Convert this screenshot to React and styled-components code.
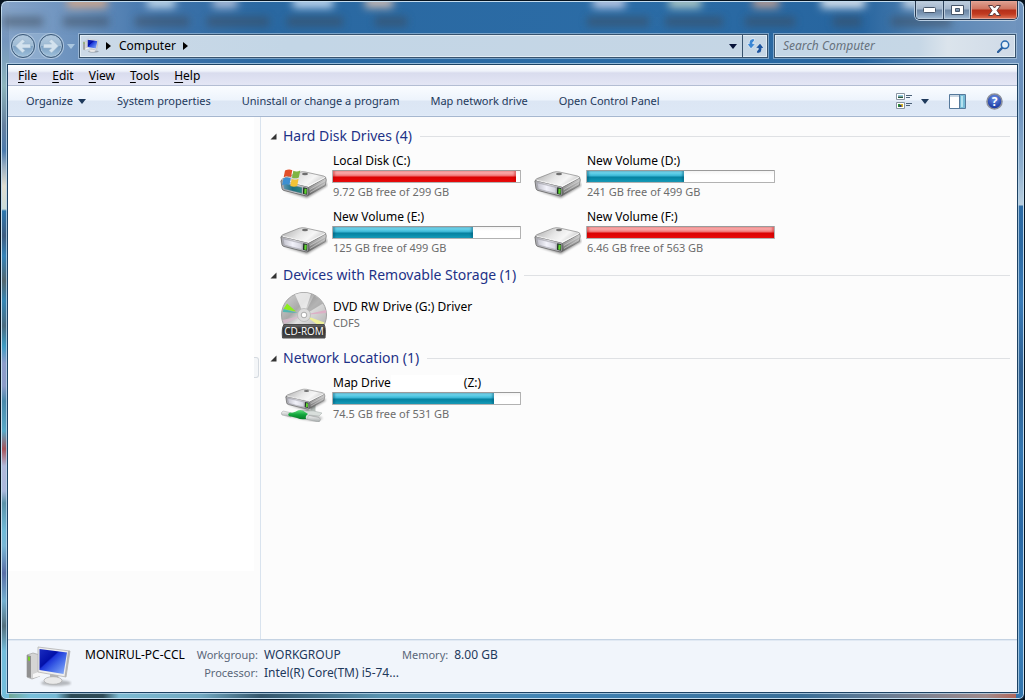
import React from 'react';
import styled, { createGlobalStyle, css } from 'styled-components';

const Global = createGlobalStyle`
  * { box-sizing: border-box; }
  body {
    margin: 0;
    background: #06131f;
    font: 12px/16px "Noto Sans", "Open Sans", sans-serif;
    color: #000;
  }
  button, input { font: inherit; color: inherit; }
  h2, p, ul, dl, dd, dt { margin: 0; padding: 0; font-weight: normal; }
  svg { display: block; flex: none; }
`;

const plain = css`
  border: 0;
  padding: 0;
  background: none;
`;

/* ---------- window frame ---------- */

const Window = styled.div`
  position: relative;
  display: flex;
  flex-direction: column;
  min-height: 100vh;
  padding: 0 7px 6px 7px;
  border: 1px solid #06131f;
  border-radius: 7px 7px 6px 6px;
  box-shadow: inset 0 0 0 1px #c4dcee;
  overflow: hidden;
  background:
    linear-gradient(#6f93bd 0, #6a90bc 100px, #8fb0cf 165px, #b9cede 204px, #2c6ba5 205px, #2d6aa2 245px, #3a7cb8 300px, #2f5f90 370px, #3577b0 450px, #2a69a5 530px, #3b80b9 640px, #3374ab) right / 8px 100% no-repeat,
    linear-gradient(#8aa6c8 0, #7495bd 40px, #8db5bd 85px, #65809f 125px, #4c7bad 150px, #97adc1 165px, #e0ddd0 185px, #c9dbd9 208px, #2d77ae 210px, #3f5d80 235px, #3483b8 255px, #54676f 280px, #3586b4 300px, #4b6b80 325px, #3d9cc4 345px, #8c9dcb 362px, #8b9cc8 385px, #4a89aa 400px, #58a9c8 430px, #a8545a 448px, #b0b9da 465px, #a9b8dc 490px, #5c92a8 502px, #70bad8 530px, #79b7d6 545px, #596fa6 572px, #74b0d0 600px, #54707e 625px, #73bddb 650px) left / 8px 100% no-repeat,
    linear-gradient(90deg, #6f9f7c 0, #78bfdb 30px, #75b9d5 55px, #2c4a55 70px, #2f4b57 102px, #7dbbd3 118px, #71a8c0 200px, #34566c 260px, #5a93b0 380px, #4083b5 560px, #3a6f98 800px, #a08b8c 985px, #b65c4c) bottom / 100% 8px no-repeat,
    linear-gradient(90deg, #86a4c8 0, #6990bd 80px, #3f73aa 160px, #2a68a1 260px, #2b6ca6 640px, #27659f 860px, #5b87b5 940px, #7396bf);
`;

const Reflection = styled.svg`
  position: absolute;
  left: 0;
  top: 1px;
`;

const Caption = styled.header`
  position: relative;
  display: flex;
  justify-content: flex-end;
  align-items: flex-start;
  height: 33px;
  margin-right: -1px;
`;

const CaptionGroup = styled.div`
  display: flex;
  height: 19px;
  border: 1px solid #26384f;
  border-top: 0;
  border-radius: 0 0 5px 5px;
  box-shadow: 0 0 0 1px #b8cde2;
  overflow: hidden;
`;

const CaptionButton = styled.button`
  ${plain}
  display: grid;
  place-items: center;
  width: ${(p) => (p.$close ? 47 : 27)}px;
  border-left: ${(p) => (p.$first ? 0 : 1)}px solid #30445e;
  box-shadow: inset 0 0 0 1px ${(p) => (p.$close ? '#e5a394' : '#b9cbdc')};
  background: ${(p) =>
    p.$close
      ? 'linear-gradient(#dfa293 0, #cf7460 8px, #b42f19 9px, #c13a20 13px, #e0785a)'
      : 'linear-gradient(#c0cfdf 0, #a3b6cc 8px, #6d87a5 9px, #7c97b5 13px, #a5bfd8)'};
`;

const NavRow = styled.nav`
  position: relative;
  display: flex;
  align-items: center;
  height: 24px;
  margin-bottom: 6px;
`;

const Travel = styled.div`
  display: flex;
  align-items: center;
  gap: 4px;
  height: 24px;
  margin-left: 3px;
  border-radius: 12px;
  background: rgba(210, 228, 243, 0.22);
  box-shadow: 0 0 0 1px rgba(200, 220, 240, 0.35);
`;

const RoundButton = styled.button`
  ${plain}
  display: grid;
  place-items: center;
  width: 24px;
  height: 24px;
  border: 1px solid #3a5877;
  border-radius: 50%;
  box-shadow: inset 0 0 0 1px #a9c2d9, 0 0 0 1px rgba(210, 226, 240, 0.5);
  background: linear-gradient(#b3cadf 0, #9dbad4 50%, #7b9fc2 52%, #9fc1dc);
`;

const RecentButton = styled.button`
  ${plain}
  display: grid;
  place-items: center;
  width: 16px;
  height: 20px;
`;

const glassField = css`
  display: flex;
  align-items: center;
  height: 24px;
  border: 1px solid #38536e;
  outline: 1px solid rgba(190, 212, 232, 0.55);
  outline-offset: 0;
  box-shadow: inset 0 0 0 1px #e2edf5;
`;

const Address = styled.div`
  ${glassField}
  flex: 1;
  background: linear-gradient(90deg, #cbd9e7, #c3d6e6 30%, #c5d6e5);
`;

const Crumbs = styled.div`
  display: flex;
  align-items: center;
  flex: 1;
  padding-left: 3px;
`;

const Crumb = styled.button`
  ${plain}
  margin: 0 7px 0 6px;
`;

const CrumbArrow = styled.button`
  ${plain}
  display: grid;
  place-items: center;
  width: 6px;
  height: 20px;
  margin-left: ${(p) => (p.$lead ? 6 : 0)}px;
  margin-right: 2px;
`;

const AddressButton = styled.button`
  ${plain}
  display: grid;
  place-items: center;
  width: ${(p) => (p.$divided ? 25 : 18)}px;
  height: 22px;
  border-left: ${(p) => (p.$divided ? '1px solid #38536e' : 0)};
`;

const Search = styled.form`
  ${glassField}
  flex: 0 0 242px;
  margin: 0 1px 0 6px;
  padding: 0 5px 0 8px;
  background: linear-gradient(90deg, #c3d6e6 0, #c6d7e6 60%, #dbe4ec 72%, #cfdae7);
`;

const SearchInput = styled.input`
  ${plain}
  flex: 1;
  min-width: 0;
  outline: 0;
  font-style: italic;
  &::placeholder { color: #66717c; opacity: 1; }
`;

/* ---------- client area ---------- */

const Client = styled.div`
  position: relative;
  display: flex;
  flex-direction: column;
  flex: 1;
  border: 1px solid #1d4263;
  margin: 0 -1px;
  box-shadow: 0 0 0 1px rgba(190, 216, 236, 0.75);
  background: #fcfcfc;
`;

const MenuBar = styled.div`
  display: flex;
  align-items: center;
  gap: 15px;
  height: 21px;
  padding: 2px 0 0 10px;
  border-bottom: 1px solid #b3bdd3;
  background: linear-gradient(#fff 0, #eef2fa 6px, #d9dcee 8px, #e4e6f5);
`;

const MenuItem = styled.button`
  ${plain}
  u { text-underline-offset: 2px; }
`;

const Toolbar = styled.div`
  display: flex;
  align-items: center;
  gap: 31px;
  height: 31px;
  padding: 0 14px 0 18px;
  border-bottom: 1px solid #a6b7cf;
  background: linear-gradient(#fafcff 0, #edf4fc 14px, #dce6f4 15px, #dde8f6 29px, #e6eefa);
  font-size: 11px;
  color: #1e395b;
`;

const Command = styled.button`
  ${plain}
  display: flex;
  align-items: center;
  gap: 5px;
`;

const ToolIcons = styled.div`
  display: flex;
  align-items: center;
  gap: 20px;
  margin-left: auto;
`;

const IconButton = styled.button`
  ${plain}
  display: flex;
  align-items: center;
  gap: 8px;
`;

const Body = styled.div`
  display: flex;
  flex: 1;
`;

const Sidebar = styled.aside`
  position: relative;
  flex: 0 0 253px;
  padding: 0 6px 68px 0;
  border-right: 1px solid #d9e3ee;
  display: flex;
`;

const Tree = styled.div`
  flex: 1;
  background: #fff;
`;

const Grip = styled.button`
  ${plain}
  position: absolute;
  right: 1px;
  top: 50%;
  margin-top: -21px;
  width: 5px;
  height: 21px;
  border: 1px solid #d5dae0;
  border-left: 0;
  border-radius: 0 3px 3px 0;
  background: #f4f6f8;
`;

const Main = styled.main`
  flex: 1;
  padding: 8px 7px 8px 9px;
`;

const Group = styled.section`
  margin-bottom: 4px;
`;

const GroupHeader = styled.div`
  display: flex;
  align-items: center;
  height: 22px;
  margin-bottom: 1px;
  &::after {
    content: "";
    flex: 1;
    height: 1px;
    margin-left: 8px;
    background: #dfe1e4;
  }
`;

const Collapse = styled.button`
  ${plain}
  width: 13px;
`;

const GroupTitle = styled.h2`
  font-size: 14px;
  line-height: 22px;
  color: #1e3287;
`;

const Items = styled.ul`
  display: grid;
  grid-template-columns: repeat(auto-fill, 254px);
  padding-left: 10px;
  list-style: none;
`;

const Item = styled.li`
  display: flex;
  align-items: center;
  gap: 4px;
  height: 56px;
`;

const Info = styled.div`
  width: 189px;
`;

const Name = styled.p`
  display: flex;
  padding-left: 1px;
  white-space: nowrap;
`;

const Masked = styled.span`
  width: 73px;
  background: #fff;
`;

const Note = styled.p`
  padding-left: 1px;
  font-size: 11px;
  color: #6d6d6d;
`;

const Meter = styled.div`
  height: 13px;
  margin: 1px 0;
  border: 1px solid;
  border-color: #9b9b9b #b2b2b2 #b2b2b2;
  border-radius: 1px;
  background: linear-gradient(#f4f4f4, #fff 4px);
`;

const Fill = styled.div`
  height: 11px;
  box-shadow: inset 2px 0 2px ${(p) => (p.$full ? 'rgba(190,0,0,.35)' : 'rgba(0,80,110,.4)')},
    inset -2px 0 2px ${(p) => (p.$full ? 'rgba(190,0,0,.35)' : 'rgba(0,80,110,.4)')};
  background: ${(p) =>
    p.$full
      ? 'linear-gradient(#fbb7b7 0, #f79a9a 3px, #f06a6a 5px, #d90202 6px, #e30505 9px, #f01414)'
      : 'linear-gradient(#8adcf0 0, #55cae4 3px, #38b3d2 5px, #06819f 6px, #0b8fae 9px, #25b0cc)'};
`;

const Details = styled.footer`
  display: flex;
  align-items: flex-start;
  min-height: 53px;
  padding: 4px 18px 0;
  border-top: 1px solid #c5d3e3;
  box-shadow: inset 0 1px 0 #e1e9f3;
  background: #f1f5fb;
`;

const HostName = styled.p`
  width: 105px;
  margin-left: 13px;
  padding-top: 2px;
  line-height: 18px;
`;

const Facts = styled.dl`
  display: grid;
  grid-template-columns: 62px 132px auto auto;
  column-gap: 6px;
  grid-auto-rows: 18px;
  padding: 2px 0 0 6px;
  line-height: 18px;
  white-space: nowrap;
  dt { font-size: 11px; color: #5a6779; text-align: right; }
  dd { color: #1e395b; }
`;

/* ---------- drawings ---------- */

const DownArrow = ({ color = '#1e395b' }) => (
  <svg width="8" height="5"><path d="M0 0h8L4 5z" fill={color} /></svg>
);
const RightArrow = () => (
  <svg width="5" height="8"><path d="M0 0l5 4-5 4z" fill="#000" /></svg>
);

const Defs = () => (
  <svg width="0" height="0" style={{ position: 'absolute' }} aria-hidden="true">
    <defs>
      <linearGradient id="top" x1="0" y1=".3" x2="1" y2=".7">
        <stop offset="0" stopColor="#b4b4b4" /><stop offset=".4" stopColor="#e6e6e6" /><stop offset=".65" stopColor="#f6f6f6" /><stop offset="1" stopColor="#bcbcbc" />
      </linearGradient>
      <linearGradient id="front" x1="0" y1="0" x2="1" y2="0">
        <stop offset="0" stopColor="#a9a9ae" /><stop offset=".5" stopColor="#d6d6dc" /><stop offset="1" stopColor="#a5a5aa" />
      </linearGradient>
      <linearGradient id="panel" x1="0" y1="0" x2="1" y2="0">
        <stop offset="0" stopColor="#c2c2cc" /><stop offset=".5" stopColor="#f2f2fa" /><stop offset="1" stopColor="#d4d4de" />
      </linearGradient>
      <linearGradient id="teal" x1="0" y1="0" x2="1" y2="0">
        <stop offset="0" stopColor="#5f97b5" /><stop offset=".5" stopColor="#1d6f80" /><stop offset="1" stopColor="#2f8580" />
      </linearGradient>
      <linearGradient id="side" x1="0" y1="0" x2="0" y2="1">
        <stop offset="0" stopColor="#cfcfcf" /><stop offset=".5" stopColor="#a0a0a0" /><stop offset="1" stopColor="#585858" />
      </linearGradient>
      <linearGradient id="disc" x1="0" y1="0" x2="1" y2="1">
        <stop offset="0" stopColor="#d9d9d9" /><stop offset=".35" stopColor="#a9a9a9" /><stop offset=".5" stopColor="#e0e0e0" /><stop offset="1" stopColor="#a4a4a4" />
      </linearGradient>
      <linearGradient id="label" x1="0" y1="0" x2="0" y2="1">
        <stop offset="0" stopColor="#6a6a6a" /><stop offset=".4" stopColor="#2a2a2a" /><stop offset="1" stopColor="#4a4a4a" />
      </linearGradient>
      <linearGradient id="screen" x1="0" y1="0" x2="1" y2="1">
        <stop offset="0" stopColor="#1a2cc0" /><stop offset=".38" stopColor="#0210a8" /><stop offset=".42" stopColor="#1c35d8" /><stop offset=".6" stopColor="#3d62e6" /><stop offset="1" stopColor="#8fb4fa" />
      </linearGradient>
      <linearGradient id="green" x1="0" y1="0" x2="0" y2="1">
        <stop offset="0" stopColor="#5fdc7c" /><stop offset=".5" stopColor="#12a53c" /><stop offset="1" stopColor="#067a26" />
      </linearGradient>
      <linearGradient id="metal" x1="0" y1="0" x2="0" y2="1">
        <stop offset="0" stopColor="#fafafa" /><stop offset="1" stopColor="#a3a9a9" />
      </linearGradient>
      <radialGradient id="help" cx=".5" cy=".3" r=".7">
        <stop offset="0" stopColor="#6d92e6" /><stop offset="1" stopColor="#12309c" />
      </radialGradient>
      <filter id="soft" x="-50%" y="-50%" width="200%" height="200%"><feGaussianBlur stdDeviation="1.2" /></filter>
      <filter id="haze" x="-50%" y="-100%" width="200%" height="300%"><feGaussianBlur stdDeviation="4" /></filter>
    </defs>
  </svg>
);

const DriveBody = ({ front = 'panel' }) => (
  <g>
    <path d="M4 39l23 7 20-12v-3L28 42z" fill="#000" opacity=".4" filter="url(#soft)" />
    <path d="M1 29.500Q1 27.500 3 26.600L19 20.300q3-1 6-.4L43.500 24q3.500 1 2 3L28.500 35.500z" fill="url(#top)" stroke="#858585" strokeWidth=".7" />
    <path d="M28.500 35.500L45.500 26q1 .8 .8 2.500L45.300 33.500 27.500 44z" fill="url(#side)" stroke="#6a6a6a" strokeWidth=".6" />
    <path d="M1 29.500Q1 28.200 3 28.700L27 34.500q1.700.5 1.500 2L28 42.500q-.3 1.800-2 1.400L4 38.500Q2.300 38 2 36.500z" fill="url(#front)" stroke="#606060" strokeWidth=".8" />
    <path d="M3 30.800l19 4.700v6L4.200 37z" fill={`url(#${front})`} stroke="#8e8e98" strokeWidth=".4" />
    <path d="M2.500 28.200l25.500 6L45 25.500" fill="none" stroke="#fff" strokeWidth=".9" />
    <path d="M30 37.500l15-8.600M30 40.500l15-9" stroke="#d6d6d6" strokeWidth=".6" />
    <ellipse cx="25" cy="22" rx="3" ry="1.200" fill="#6e6e6e" />
    <path d="M23.200 35.300l4.200 1-.5 6.400-4-1z" fill="#22302a" />
    <path d="M24.500 36.500l2.300.6-.4 4.800-2.200-.5z" fill="#5fd42e" />
  </g>
);

const WindowsFlag = () => (
  <g>
    <path d="M5 18.500q4-2 7.300-.3L11 25q-3.500-1.600-7.300.3z" fill="#e2502a" />
    <path d="M13.300 18.700q3.500 1.500 7-.2L18.800 25.500q-3 1.600-6.800.2z" fill="#7fb543" />
    <path d="M3.400 26.500q3.500-2 7.300-.3L9.400 33q-3.500-1.500-7.300.2z" fill="#3d8fd2" />
    <path d="M11.700 27q3.500 1.500 6.900-.2L17.200 34q-3 1.500-6.900 0z" fill="#f2c336" />
  </g>
);

const DriveIcon = ({ system }) => (
  <svg width="48" height="48" viewBox="0 0 48 48">
    <DriveBody front={system ? 'teal' : 'panel'} />
    {system && <WindowsFlag />}
  </svg>
);

const NetworkDriveIcon = () => (
  <svg width="48" height="48" viewBox="0 0 48 48">
    <path d="M5 42l32 6 6-4-14-6z" fill="#000" opacity=".25" filter="url(#soft)" />
    <path d="M33 31v8" stroke="#b6beba" strokeWidth="5" />
    <path d="M3 37l9 2-1 4-9-2q-2-2 1-4z" fill="url(#metal)" stroke="#9a9f9f" strokeWidth=".5" />
    <path d="M26 41l13 2.500q3 2 0 4.500l-14-3z" fill="url(#metal)" stroke="#9a9f9f" strokeWidth=".5" />
    <path d="M16 38q8-3 18-1l8 2-3 3-10-1-2 4-12-3z" fill="#d9dfdc" stroke="#a5acaa" strokeWidth=".5" />
    <path d="M10 38.500q3 .5 6-1 5-3 9 .5l3 2q-3 1.500-2 5-5 1-9-1l-8-2q-2-2 1-3.500z" fill="url(#green)" />
    <g transform="translate(5 -1) scale(.86 .82)"><DriveBody /></g>
  </svg>
);

const DiscIcon = () => (
  <svg width="48" height="48" viewBox="0 0 48 48">
    <circle cx="24" cy="24" r="22.500" fill="url(#disc)" stroke="#a2a2a2" />
    <path d="M24 24L15 3.500A22 22 0 0 1 31 3z" fill="#f2f2f2" opacity=".8" />
    <path d="M24 24L34 4.500A22 22 0 0 1 43 12.500z" fill="#8e8e8e" opacity=".55" />
    <path d="M16 20.500L7 12.500 3.500 18z" fill="#8cee1c" />
    <path d="M18 22L3.500 18 2.800 21z" fill="#28b6b0" opacity=".7" />
    <path d="M24 24L46 19l.2 3z" fill="#dcb0c6" />
    <path d="M24 24l20.500 7.500-3 5z" fill="#eef09a" />
    <path d="M24 24L2.500 29 4 33z" fill="#d8b9cc" opacity=".8" />
    <circle cx="24" cy="24" r="6.500" fill="#dcdcdc" stroke="#b1b1b1" strokeWidth=".7" />
    <circle cx="24" cy="24" r="2.800" fill="#fff" stroke="#999" strokeWidth=".8" />
    <path d="M4 33.500h40q2 3 1 13.500H2.500Q1.500 37 4 33.500z" fill="url(#label)" stroke="#4a4a4a" />
    <text x="24" y="44" textAnchor="middle" fontSize="10" fontFamily="'Open Sans', sans-serif" fill="#fff">CD-ROM</text>
  </svg>
);

const ComputerIcon = ({ size }) => (
  <svg width={size} height={size} viewBox="0 0 46 46">
    <ellipse cx="30" cy="39" rx="15" ry="3" fill="#000" opacity=".25" filter="url(#soft)" />
    <path d="M1 11l6-2 7 2v21l-8 3-5-2z" fill="#d4d4d4" stroke="#a2a2a2" strokeWidth=".7" />
    <path d="M1 11l4 1v22l-4-1z" fill="#909090" />
    <path d="M2 12.500l2 .5v4l-2-.5z" fill="#78d02a" />
    <path d="M7 30l11-4v5l-11 3z" fill="#f6f6f6" />
    <path d="M24 30h8l1 6h-9z" fill="#b7b7b7" />
    <ellipse cx="27" cy="36.500" rx="9" ry="3.800" fill="#e9e9e9" stroke="#aaa" strokeWidth=".7" />
    <path d="M12 3l32 4-4 26-28-5z" fill="#eee" stroke="#b2b2b2" strokeWidth=".8" />
    <path d="M13.500 5l27.500 3.500-3.500 21.500L13.500 26z" fill="url(#screen)" />
    <path d="M44 7l-4 26-1.500-.3L42 7z" fill="#b5b5b5" />
  </svg>
);

const TravelArrow = ({ flip }) => (
  <svg width="16" height="14" viewBox="0 0 16 14" transform={flip ? 'scale(-1 1)' : undefined}>
    <path d="M7.500 0L.5 7l7 7 2.500-2.500L7.500 9H15.500V5H7.500L10 2.500z" fill="#d3e2ee" stroke="#9bb7cf" strokeWidth=".6" />
  </svg>
);

const RefreshIcon = () => (
  <svg width="17" height="16" viewBox="0 0 15 14">
    <g stroke="#fff" strokeWidth=".5">
      <path d="M6.500 .5q-4.500 0-4.500 3.500V5H0l3.500 4.500L7.500 5H5q-.3-1.800 1.500-2.200z" fill="#3a86d4" />
      <path d="M8.500 13.500q4.500 0 4.500-3.500V9h2l-3.500-4.500L7.500 9H10q.3 1.800-1.500 2.200z" fill="#1d559f" />
    </g>
  </svg>
);

const MagnifierIcon = () => (
  <svg width="13" height="13" viewBox="0 0 13 13">
    <path d="M1 12l4-4" stroke="#2c5f9c" strokeWidth="2.400" strokeLinecap="round" />
    <circle cx="8" cy="4.800" r="3.700" fill="#e5f0f8" stroke="#2a6bb0" strokeWidth="1.500" />
  </svg>
);

const ViewsIcon = () => (
  <svg width="17" height="16" viewBox="0 0 17 16">
    <g fill="#fff" stroke="#8895a2"><path d="M.5.5h8v6h-8zM.5 9.500h8v6h-8z" /></g>
    <path d="M2 2h5v1.500H2z" fill="#8ec6e2" /><path d="M2 3.500h5V5H2z" fill="#24563c" />
    <path d="M2 11h2.500v3H2z" fill="#2c8c34" /><path d="M4.500 11H7v3H4.500z" fill="#d9b627" /><path d="M3.500 12h2v2h-2z" fill="#27357c" />
    <path d="M10 2.500h6M10 4.500h4M10 10.500h6M10 12.500h4" stroke="#4a6077" />
  </svg>
);

const PreviewIcon = () => (
  <svg width="17" height="15" viewBox="0 0 17 15">
    <path d="M.5.500h16v14H.5z" fill="#fff" stroke="#56799b" />
    <path d="M1 1h10v2H1z" fill="#c9d6e2" />
    <path d="M10.500 1v13" stroke="#56799b" />
    <path d="M11 1h5v13h-5z" fill="#77bbd6" /><path d="M12 2h2v11h-2z" fill="#b4e2f0" />
  </svg>
);

const HelpIcon = () => (
  <svg width="17" height="17" viewBox="0 0 17 17">
    <circle cx="8.500" cy="8.500" r="7.500" fill="url(#help)" stroke="#8a8f9c" strokeWidth="1.600" />
    <text x="8.500" y="13" textAnchor="middle" fontSize="12" fontWeight="700" fontFamily="'Open Sans', sans-serif" fill="#fff">?</text>
  </svg>
);

/* ---------- data ---------- */

const smudges = [
  [2, 40], [62, 46], [134, 54], [206, 62], [286, 56], [374, 32],
  [586, 62], [664, 58], [744, 50], [832, 28], [890, 60],
];
const glows = [
  [66, 40, '#c9a58f'], [146, 28, '#bcd4e8'], [212, 24, '#a8bbd8'], [292, 40, '#b9d3ec'], [364, 28, '#c3b7b4'],
  [592, 32, '#b8c8e4'], [668, 32, '#a9c6c5'], [752, 26, '#b09a94'], [820, 44, '#d7e2ee'], [902, 20, '#c4d4e4'],
];

const disks = [
  { name: 'Local Disk (C:)', used: 98, full: true, note: '9.72 GB free of 299 GB', system: true },
  { name: 'New Volume (D:)', used: 52, note: '241 GB free of 499 GB' },
  { name: 'New Volume (E:)', used: 75, note: '125 GB free of 499 GB' },
  { name: 'New Volume (F:)', used: 100, full: true, note: '6.46 GB free of 563 GB' },
];

const commands = ['System properties', 'Uninstall or change a program', 'Map network drive', 'Open Control Panel'];

const Usage = ({ used, full, label }) => (
  <Meter role="meter" aria-label={label} aria-valuenow={used} aria-valuemin={0} aria-valuemax={100}>
    <Fill $full={full} style={{ width: `${used}%` }} />
  </Meter>
);

const Section = ({ title, children }) => (
  <Group>
    <GroupHeader>
      <Collapse aria-label={`Collapse ${title}`}>
        <svg width="7" height="7"><path d="M6.500.5v6h-6z" fill="#333" /></svg>
      </Collapse>
      <GroupTitle>{title}</GroupTitle>
    </GroupHeader>
    <Items>{children}</Items>
  </Group>
);

export default function App() {
  return (
    <>
      <Global />
      <Defs />
      <Window>
        <Reflection width="1023" height="62" aria-hidden="true">
          <g filter="url(#haze)">
            {glows.map(([x, w, c]) => <rect key={x} x={x} y="-6" width={w} height="12" fill={c} />)}
          </g>
          <g filter="url(#haze)" opacity=".6">
            {smudges.map(([x, w]) => <rect key={x} x={x} y="15" width={w} height="9" fill="#3c4c5c" />)}
          </g>
        </Reflection>
        <Caption>
          <CaptionGroup>
            <CaptionButton $first aria-label="Minimize">
              <svg width="13" height="6"><rect x=".5" y=".5" width="12" height="5" rx="1" fill="#fff" stroke="#46566a" /></svg>
            </CaptionButton>
            <CaptionButton aria-label="Maximize">
              <svg width="13" height="10"><path d="M.5.5h12v9H.5zM4.500 3.500v3h4v-3z" fillRule="evenodd" fill="#fff" stroke="#46566a" /></svg>
            </CaptionButton>
            <CaptionButton $close aria-label="Close">
              <svg width="13" height="11"><path d="M.5.5h4l2 2.500 2-2.500h4L9 5.500l3.500 5h-4l-2-2.500-2 2.500h-4L4 5.500z" fill="#fff" stroke="#5a3a3c" /></svg>
            </CaptionButton>
          </CaptionGroup>
        </Caption>
        <NavRow>
          <Travel>
            <RoundButton aria-label="Back"><TravelArrow /></RoundButton>
            <RoundButton aria-label="Forward"><TravelArrow flip /></RoundButton>
          </Travel>
          <RecentButton aria-label="Recent pages"><DownArrow color="#a9c6e0" /></RecentButton>
          <Address>
            <Crumbs>
              <ComputerIcon size={16} />
              <CrumbArrow $lead aria-label="Locations"><RightArrow /></CrumbArrow>
              <Crumb>Computer</Crumb>
              <CrumbArrow aria-label="Computer contents"><RightArrow /></CrumbArrow>
            </Crumbs>
            <AddressButton aria-label="Previous locations"><DownArrow color="#061238" /></AddressButton>
            <AddressButton $divided aria-label="Refresh"><RefreshIcon /></AddressButton>
          </Address>
          <Search>
            <SearchInput aria-label="Search Computer" placeholder="Search Computer" />
            <MagnifierIcon />
          </Search>
        </NavRow>
        <Client>
          <MenuBar>
            {['File', 'Edit', 'View', 'Tools', 'Help'].map((m) => (
              <MenuItem key={m}><u>{m[0]}</u>{m.slice(1)}</MenuItem>
            ))}
          </MenuBar>
          <Toolbar>
            <Command>Organize <DownArrow /></Command>
            {commands.map((c) => <Command key={c}>{c}</Command>)}
            <ToolIcons>
              <IconButton aria-label="Change your view"><ViewsIcon /><DownArrow /></IconButton>
              <IconButton aria-label="Preview pane"><PreviewIcon /></IconButton>
              <IconButton aria-label="Help"><HelpIcon /></IconButton>
            </ToolIcons>
          </Toolbar>
          <Body>
            <Sidebar>
              <Tree />
              <Grip aria-label="Resize navigation pane" />
            </Sidebar>
            <Main>
              <Section title="Hard Disk Drives (4)">
                {disks.map((d) => (
                  <Item key={d.name}>
                    <DriveIcon system={d.system} />
                    <Info>
                      <Name>{d.name}</Name>
                      <Usage used={d.used} full={d.full} label={d.name} />
                      <Note>{d.note}</Note>
                    </Info>
                  </Item>
                ))}
              </Section>
              <Section title="Devices with Removable Storage (1)">
                <Item>
                  <DiscIcon />
                  <Info>
                    <Name>DVD RW Drive (G:) Driver</Name>
                    <Note>CDFS</Note>
                  </Info>
                </Item>
              </Section>
              <Section title="Network Location (1)">
                <Item>
                  <NetworkDriveIcon />
                  <Info>
                    <Name>Map Drive<Masked /> (Z:)</Name>
                    <Usage used={86} label="Map Drive (Z:)" />
                    <Note>74.5 GB free of 531 GB</Note>
                  </Info>
                </Item>
              </Section>
            </Main>
          </Body>
          <Details>
            <ComputerIcon size={46} />
            <HostName>MONIRUL-PC-CCL</HostName>
            <Facts>
              <dt>Workgroup:</dt><dd>WORKGROUP</dd>
              <dt>Memory:</dt><dd>8.00 GB</dd>
              <dt>Processor:</dt><dd>Intel(R) Core(TM) i5-74...</dd>
            </Facts>
          </Details>
        </Client>
      </Window>
    </>
  );
}
